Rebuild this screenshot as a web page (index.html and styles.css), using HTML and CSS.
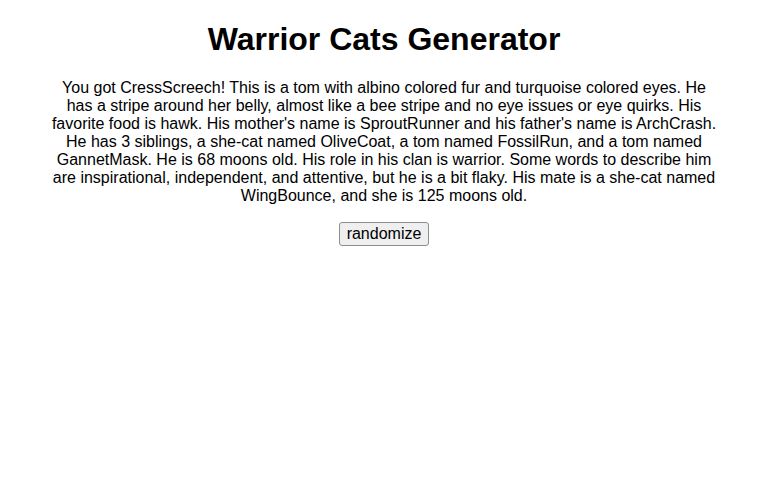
FILE: index.html
```
<!DOCTYPE html>
<html lang="en">
<head>
  <meta charset="UTF-8">
  <meta name="viewport" content="width=device-width, initial-scale=1.0">
  <title>Warrior Cats Generator</title>
  <link rel="stylesheet" href="styles.css">
</head>
<body>
  <h1 class="title">Warrior Cats Generator</h1>

  <p class="result" id="result">You got CressScreech! This is a tom with albino colored fur and turquoise colored eyes. He has a stripe around her belly, almost like a bee stripe and no eye issues or eye quirks. His favorite food is hawk. His mother's name is SproutRunner and his father's name is ArchCrash. He has 3 siblings, a she-cat named OliveCoat, a tom named FossilRun, and a tom named GannetMask. He is 68 moons old. His role in his clan is warrior. Some words to describe him are inspirational, independent, and attentive, but he is a bit flaky. His mate is a she-cat named WingBounce, and she is 125 moons old.</p>

  <button class="button" id="randomBtn">randomize</button>
</body>
</html>
```

FILE: styles.css
```
body {
  margin: 0;
  padding: 0 50px;
  text-align: center;
  font-family: "Liberation Sans", Arial, sans-serif;
  background-color: #fff;
  color: #000;
}

.title {
  font-size: 32px;
  margin: 21px 0;
}

.result {
  font-size: 16px;
  margin: 16px 0 17px;
}

/* Plain grey button */
.button {
  font-family: "Liberation Sans", Arial, sans-serif;
  font-size: 16px;
  padding: 2px 7px;
  color: #000;
  background-color: #efefef;
  border: 1px solid #8f8f8f;
  border-radius: 3px;
}
```
